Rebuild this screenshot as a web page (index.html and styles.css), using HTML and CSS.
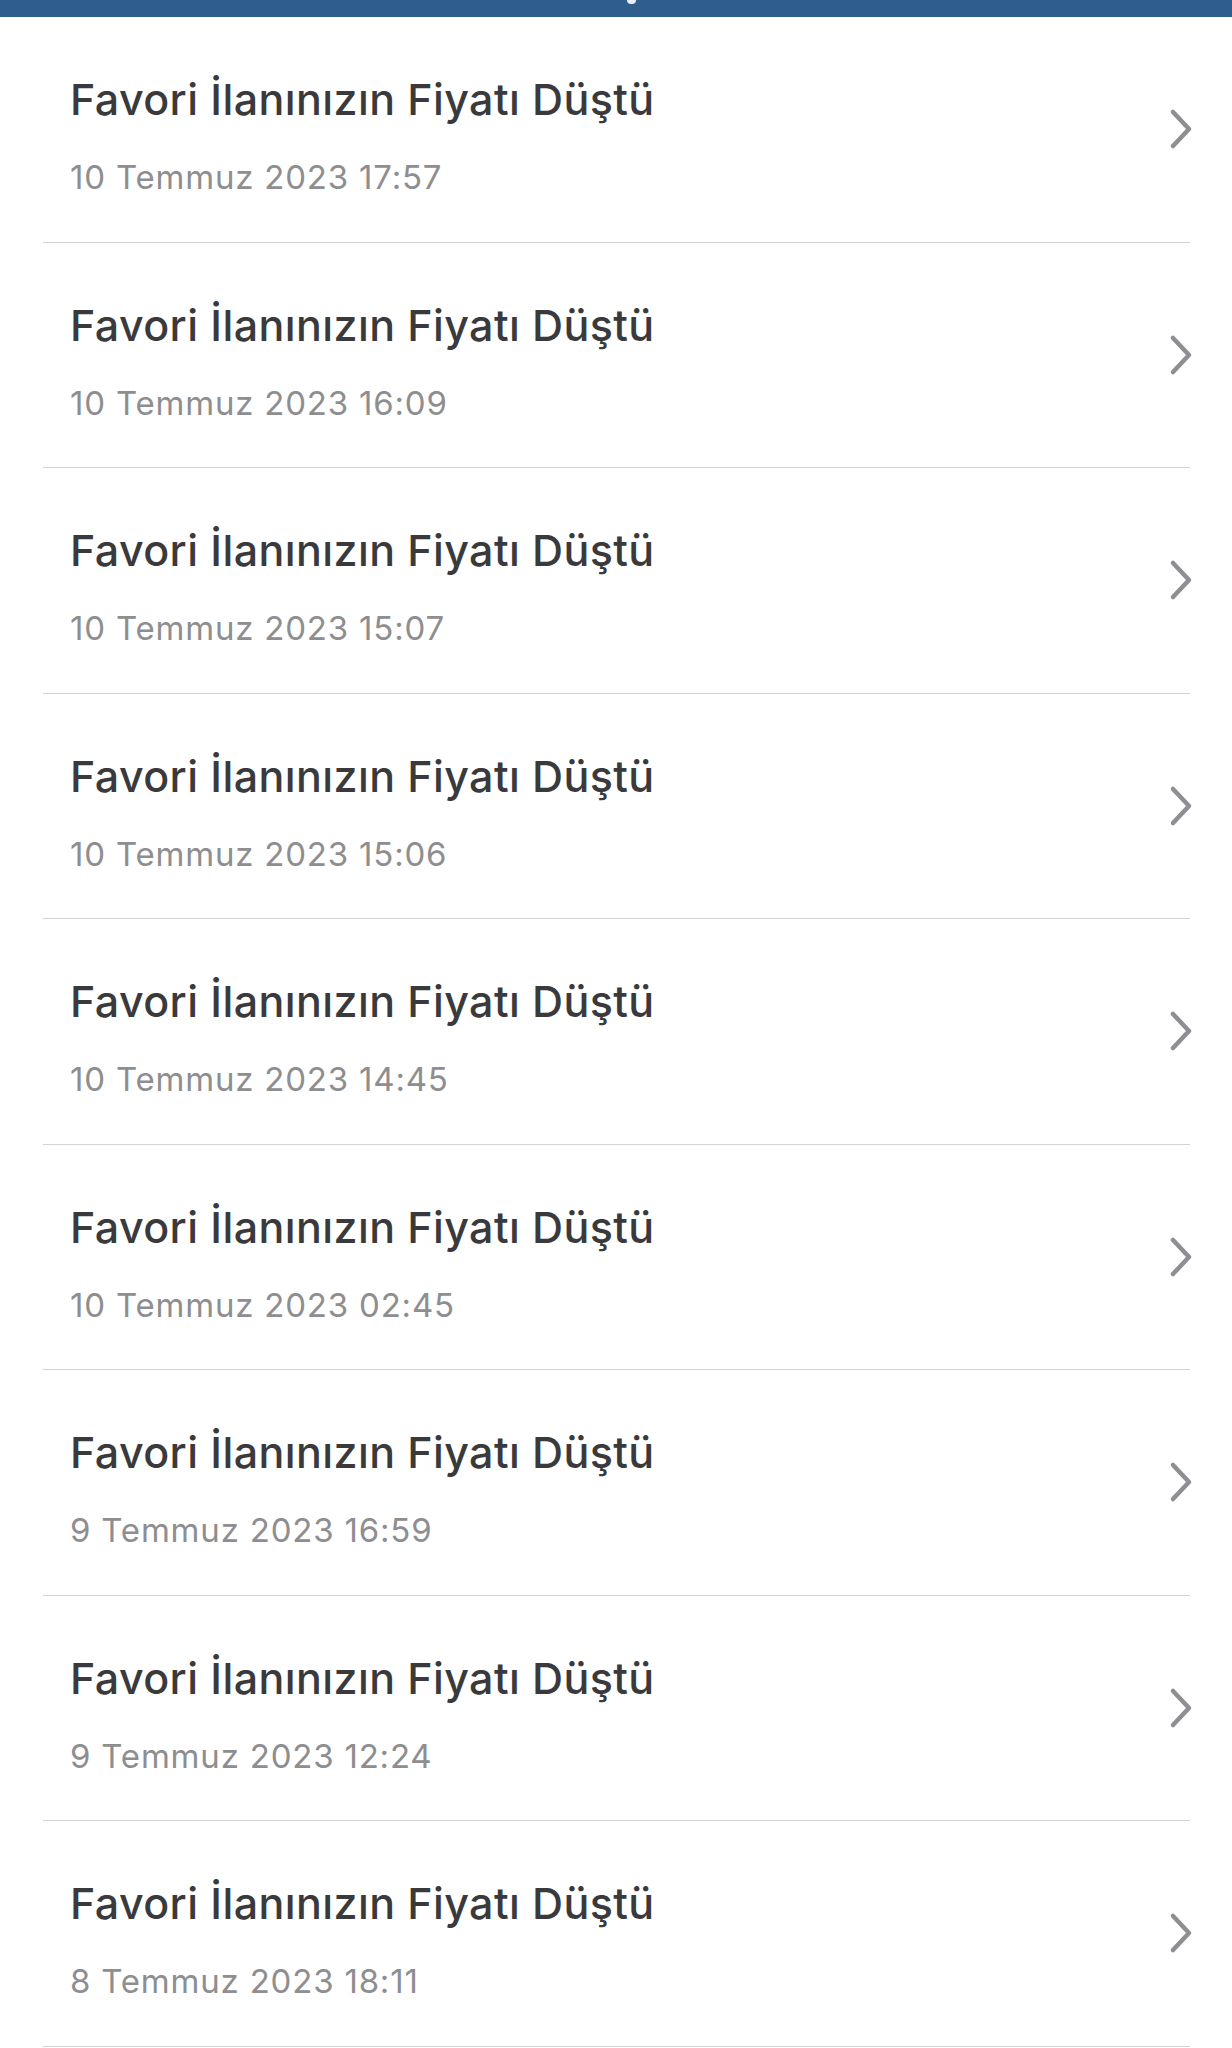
FILE: index.html
```html
<!DOCTYPE html>
<html lang="tr">
<head>
    <meta charset="UTF-8">
    <meta name="viewport" content="width=device-width, initial-scale=1.0">
    <title>Bildirimler</title>
    <link rel="stylesheet" href="styles.css">
</head>
<body>
    <div class="topbar"><span class="topbar-dot"></span></div>
    <ul class="notifications">
        <li class="item">
            <div class="item-text">
                <p class="item-title">Favori İlanınızın Fiyatı Düştü</p>
                <p class="item-date">10 Temmuz 2023 17:57</p>
            </div>
            <svg class="chevron" viewBox="0 0 24 42"><path d="M4 4 L20 21 L4 38"/></svg>
        </li>
        <li class="item">
            <div class="item-text">
                <p class="item-title">Favori İlanınızın Fiyatı Düştü</p>
                <p class="item-date">10 Temmuz 2023 16:09</p>
            </div>
            <svg class="chevron" viewBox="0 0 24 42"><path d="M4 4 L20 21 L4 38"/></svg>
        </li>
        <li class="item">
            <div class="item-text">
                <p class="item-title">Favori İlanınızın Fiyatı Düştü</p>
                <p class="item-date">10 Temmuz 2023 15:07</p>
            </div>
            <svg class="chevron" viewBox="0 0 24 42"><path d="M4 4 L20 21 L4 38"/></svg>
        </li>
        <li class="item">
            <div class="item-text">
                <p class="item-title">Favori İlanınızın Fiyatı Düştü</p>
                <p class="item-date">10 Temmuz 2023 15:06</p>
            </div>
            <svg class="chevron" viewBox="0 0 24 42"><path d="M4 4 L20 21 L4 38"/></svg>
        </li>
        <li class="item">
            <div class="item-text">
                <p class="item-title">Favori İlanınızın Fiyatı Düştü</p>
                <p class="item-date">10 Temmuz 2023 14:45</p>
            </div>
            <svg class="chevron" viewBox="0 0 24 42"><path d="M4 4 L20 21 L4 38"/></svg>
        </li>
        <li class="item">
            <div class="item-text">
                <p class="item-title">Favori İlanınızın Fiyatı Düştü</p>
                <p class="item-date">10 Temmuz 2023 02:45</p>
            </div>
            <svg class="chevron" viewBox="0 0 24 42"><path d="M4 4 L20 21 L4 38"/></svg>
        </li>
        <li class="item">
            <div class="item-text">
                <p class="item-title">Favori İlanınızın Fiyatı Düştü</p>
                <p class="item-date">9 Temmuz 2023 16:59</p>
            </div>
            <svg class="chevron" viewBox="0 0 24 42"><path d="M4 4 L20 21 L4 38"/></svg>
        </li>
        <li class="item">
            <div class="item-text">
                <p class="item-title">Favori İlanınızın Fiyatı Düştü</p>
                <p class="item-date">9 Temmuz 2023 12:24</p>
            </div>
            <svg class="chevron" viewBox="0 0 24 42"><path d="M4 4 L20 21 L4 38"/></svg>
        </li>
        <li class="item">
            <div class="item-text">
                <p class="item-title">Favori İlanınızın Fiyatı Düştü</p>
                <p class="item-date">8 Temmuz 2023 18:11</p>
            </div>
            <svg class="chevron" viewBox="0 0 24 42"><path d="M4 4 L20 21 L4 38"/></svg>
        </li>
    </ul>
</body>
</html>
```

FILE: styles.css
```css
body {
    margin: 0;
    padding: 0;
    background: #ffffff;
    font-family: Inter, "Noto Sans", Arial, sans-serif;
}
.topbar {
    height: 17px;
    background-color: #2f5d8c;
    display: flex;
    justify-content: center;
    align-items: flex-start;
}
.topbar-dot {
    width: 9px;
    height: 4px;
    margin-left: 30px;
    background: #e8eef5;
    border-radius: 0 0 5px 5px;
}
.notifications {
    list-style: none;
    margin: 0;
    padding: 0;
}
.item {
    box-sizing: border-box;
    height: 225.5px;
    margin: 0 42px 0 43px;
    border-bottom: 1.5px solid #d3d3d6;
    display: flex;
    align-items: flex-start;
    justify-content: space-between;
}
.item-text {
    padding: 58px 0 0 27px;
}
.item-title {
    margin: 0;
    font-size: 43px;
    font-weight: 500;
    line-height: 48px;
    color: #3a3a3c;
    letter-spacing: 0.4px;
}
.item-date {
    margin: 34px 0 0 0;
    font-size: 33px;
    line-height: 40px;
    color: #8e8e90;
    letter-spacing: 0.8px;
}
.chevron {
    width: 24px;
    height: 42px;
    align-self: center;
    margin-right: -3px;
    fill: none;
    stroke: #8e8e93;
    stroke-width: 4.5;
    stroke-linecap: round;
    stroke-linejoin: round;
}
```
